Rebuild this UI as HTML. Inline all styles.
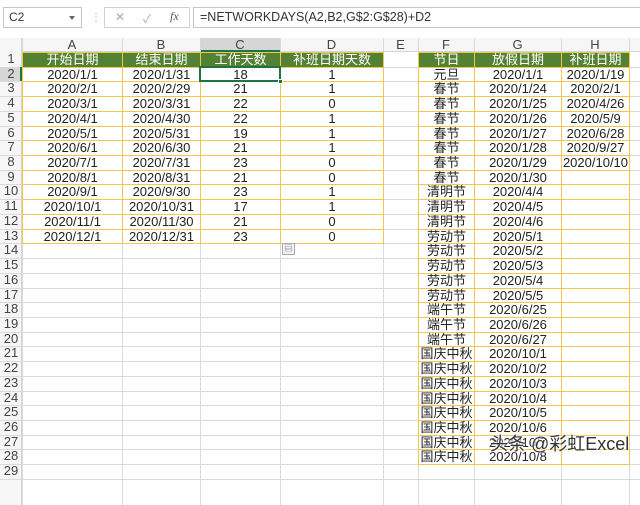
<!DOCTYPE html>
<html><head><meta charset="utf-8"><style>
*{margin:0;padding:0;box-sizing:border-box}
body{width:640px;height:467px;overflow:hidden;background:#fff;font-family:"Liberation Sans","Noto Sans CJK SC",sans-serif;position:relative;color:#222}
.top{position:absolute;left:0;top:0;width:640px;height:36px;background:#fff}
.nb{position:absolute;left:3px;top:7px;width:79px;height:21px;border:1px solid #c6c6c6;font-size:12px;line-height:19px;padding-left:5px;color:#333}
.nb:after{content:"";position:absolute;right:6px;top:8px;border:3px solid transparent;border-top:4px solid #666}
.fx{position:absolute;left:104px;top:7px;width:86px;height:21px;border:1px solid #d0d0d0;font-size:12px;color:#aaa}
.fb{position:absolute;left:193px;top:7px;width:447px;height:21px;border:1px solid #c6c6c6;border-right:none;font-size:12.5px;line-height:19px;padding-left:6px;color:#333}
.c{position:absolute;font-size:13px;text-align:center;white-space:nowrap;overflow:hidden}
</style></head><body>
<div class="top">
<div class="nb">C2</div>
<div style="position:absolute;left:91px;top:12px;color:#999;font-size:10px">⋮</div>
<div class="fx"><span style="position:absolute;left:10px;top:2px">✕</span><span style="position:absolute;left:38px;top:2px">✓</span><span style="position:absolute;left:65px;top:1px;color:#555;font-style:italic;font-family:'Liberation Serif',serif">fx</span></div>
<div class="fb">=NETWORKDAYS(A2,B2,G$2:G$28)+D2</div>
</div>
<div id="g"></div>
<div style="position:absolute;left:282px;top:243px;width:13px;height:12px;border:1px solid #aaa;background:#f3f3f3;font-size:8px;line-height:10px;text-align:center;color:#557">▤</div>
<div style="position:absolute;left:490px;top:430px;font-size:18px;color:#333;text-shadow:0 0 2px #fff,0 0 2px #fff">头条 @彩虹Excel</div>
<script>
const cols=[[0,22,''],[22,122,'A'],[122,200,'B'],[200,280,'C'],[280,383,'D'],[383,418,'E'],[418,474,'F'],[474,561,'G'],[561,629,'H'],[629,660,'I']];
const T=38,HH=14,RH=14.72;
let h='';
h+=`<div style="position:absolute;left:0;top:${T}px;width:640px;height:${HH}px;background:#f6f6f6;border-bottom:1px solid #d4d4d4"></div>`;
h+=`<div style="position:absolute;left:0;top:${T}px;width:22px;height:467px;background:#f6f6f6;border-right:1px solid #d4d4d4"></div>`;
h+=`<div style="position:absolute;left:200px;top:${T}px;width:80px;height:${HH}px;background:#d6d6d6;border-bottom:2px solid #217346"></div>`;
for(const [l,r,n] of cols){ if(n){h+=`<div class="c" style="left:${l}px;top:${T}px;width:${r-l}px;height:${HH}px;line-height:${HH}px;color:#444">${n}</div>`;}
 h+=`<div style="position:absolute;left:${r}px;top:${T}px;width:1px;height:467px;background:#dadada"></div>`;}
for(let i=1;i<=29;i++){const y=T+HH+(i-1)*RH;
 h+=`<div style="position:absolute;left:0;top:${y+RH}px;width:640px;height:1px;background:#dadada"></div>`;
 if(i==2)h+=`<div style="position:absolute;left:0;top:${y}px;width:22px;height:${RH}px;background:#d6d6d6;border-right:2px solid #217346"></div>`;
 h+=`<div class="c" style="left:0;top:${y}px;width:22px;height:${RH}px;line-height:${RH}px;color:#444">${i}</div>`;}
const A=['2020/1/1','2020/2/1','2020/3/1','2020/4/1','2020/5/1','2020/6/1','2020/7/1','2020/8/1','2020/9/1','2020/10/1','2020/11/1','2020/12/1'];
const B=['2020/1/31','2020/2/29','2020/3/31','2020/4/30','2020/5/31','2020/6/30','2020/7/31','2020/8/31','2020/9/30','2020/10/31','2020/11/30','2020/12/31'];
const C=[18,21,22,22,19,21,23,21,23,17,21,23],D=[1,1,0,1,1,1,0,0,1,1,0,0];
const F=[],G=[];
F.push('元旦');G.push('2020/1/1');
for(let d=24;d<=30;d++){F.push('春节');G.push('2020/1/'+d)}
for(let d=4;d<=6;d++){F.push('清明节');G.push('2020/4/'+d)}
for(let d=1;d<=5;d++){F.push('劳动节');G.push('2020/5/'+d)}
for(let d=25;d<=27;d++){F.push('端午节');G.push('2020/6/'+d)}
for(let d=1;d<=8;d++){F.push('国庆中秋');G.push('2020/10/'+d)}
const H=['2020/1/19','2020/2/1','2020/4/26','2020/5/9','2020/6/28','2020/9/27','2020/10/10'];
function cell(ci,row,txt,hdr){const [l,r]=cols[ci];const y=T+HH+(row-1)*RH;
 h+=`<div class="c" style="left:${l}px;top:${y}px;width:${r-l+1}px;height:${RH+1}px;line-height:${RH-1}px;border:1px solid #f3c84a;${hdr?'background:#548235;color:#fff;':''}">${txt}</div>`;}
const hd=['开始日期','结束日期','工作天数','补班日期天数'];
for(let k=0;k<4;k++)cell(k+1,1,hd[k],1);
for(let i=0;i<12;i++){cell(1,i+2,A[i]);cell(2,i+2,B[i]);cell(3,i+2,C[i]);cell(4,i+2,D[i]);}
['节日','放假日期','补班日期'].forEach((t,k)=>cell(k+6,1,t,1));
for(let i=0;i<27;i++){cell(6,i+2,F[i]);cell(7,i+2,G[i]);cell(8,i+2,H[i]||'');}
const y2=T+HH+RH;
h+=`<div style="position:absolute;left:199px;top:${y2-1}px;width:82px;height:${RH+2}px;border:2px solid #217346"></div>`;
h+=`<div style="position:absolute;left:278px;top:${y2+RH-2}px;width:5px;height:5px;background:#217346;border:1px solid #fff"></div>`;
document.getElementById('g').innerHTML=h;
</script>
</body></html>
